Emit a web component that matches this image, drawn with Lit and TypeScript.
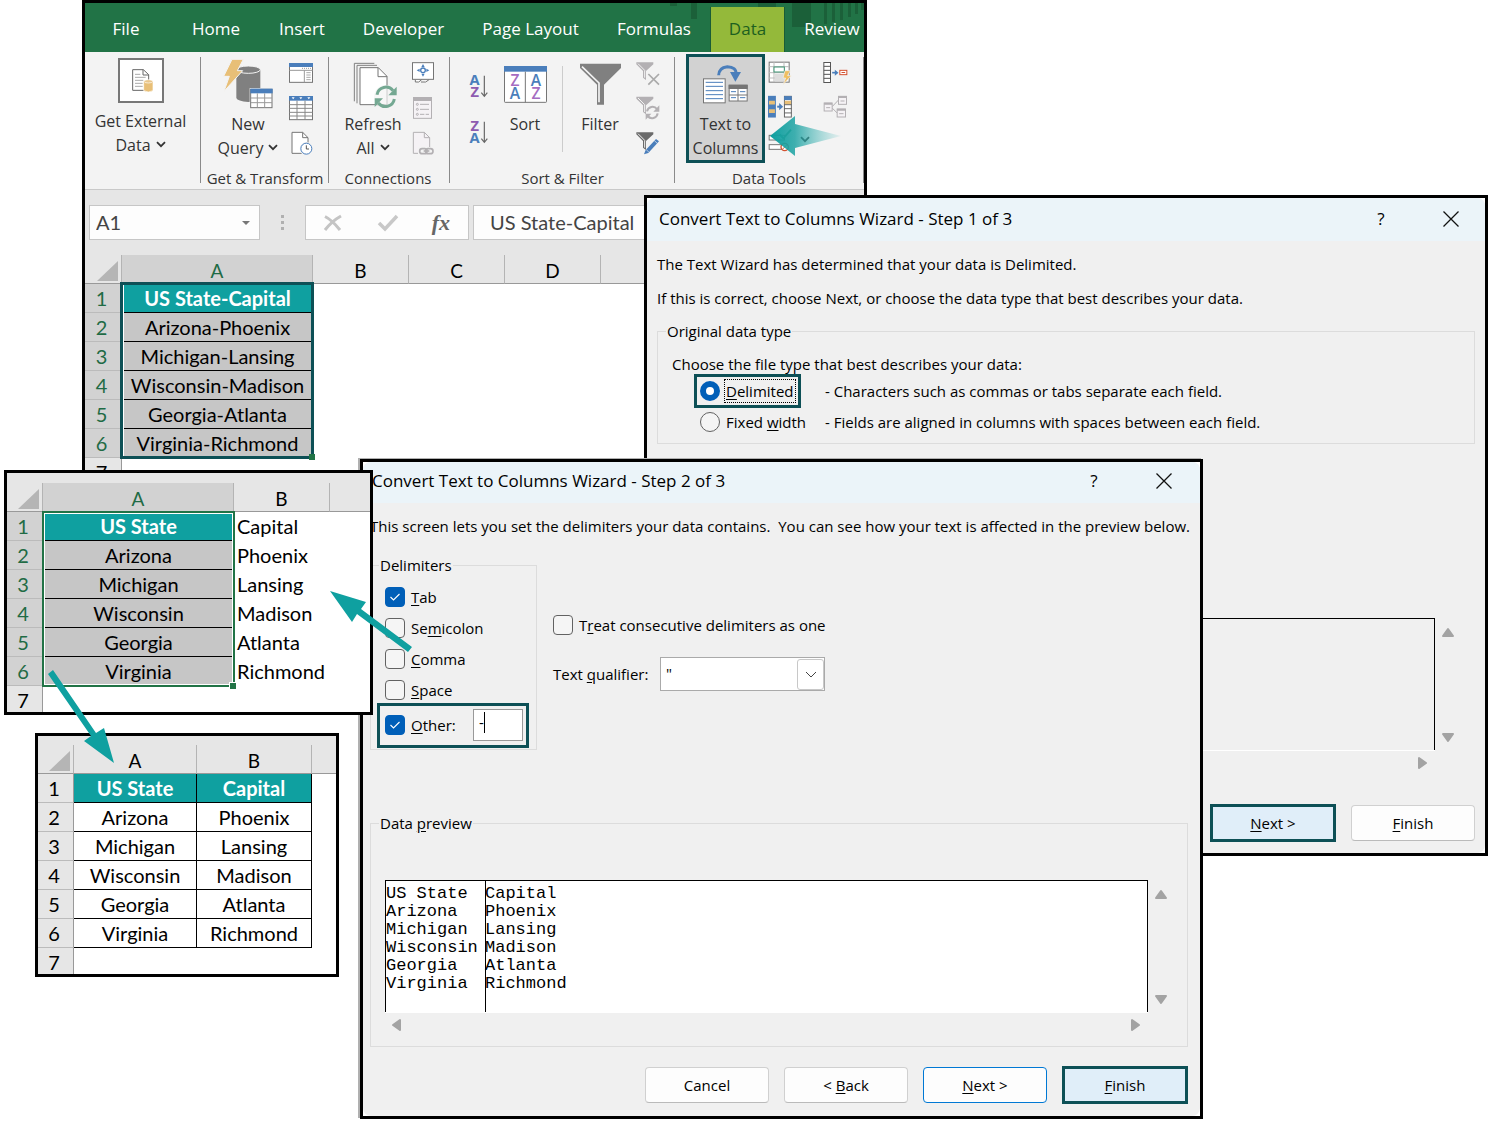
import { LitElement, html, css, svg, nothing, TemplateResult } from "lit";
import { customElement, property } from "lit/decorators.js";
import { classMap } from "lit/directives/class-map.js";
import { styleMap } from "lit/directives/style-map.js";

const GREY = "#757575";
const PALE = "#b3b0b3";
const BLUE = "#4a7ebb";
const PURPLE = "#8e5bb0";
const SAND = "#e8bf77";

const icon = (box: string, w: number, h: number, body: unknown) =>
  html`<svg viewBox=${box} width=${w} height=${h} aria-hidden="true">${body}</svg>`;

const chevron = html`<svg class="chev" viewBox="0 0 10 7" width="10" height="7" aria-hidden="true">
  <path d="M1 1.2 5 5.2 9 1.2" fill="none" stroke="#333" stroke-width="1.8" />
</svg>`;

const externalIcon = icon("114 174 138 135", 46, 45, svg`
  <rect x="117" y="177" width="132" height="129" fill="#fff" stroke="#777" stroke-width="6"/>
  <path d="M158 209H190L206 224V271H158Z" fill="#fff" stroke="#666" stroke-width="3"/>
  <path d="M189 209V225H206" fill="none" stroke="#666" stroke-width="3"/>
  <path d="M165 223H181M165 232H197M165 241H190M165 250H188M165 259H188" stroke="#aaa" stroke-width="3"/>
  <path d="M191 243V272Q205 280 219 272V243Z" fill="${SAND}" stroke="#fff" stroke-width="2"/>
  <ellipse cx="205" cy="244" rx="13" ry="5" fill="#e9c68a" stroke="#fff" stroke-width="2"/>`);

const queryIcon = icon("434 180 147 144", 49, 48, svg`
  <path d="M471 210V294Q474 303 507 306Q543 302 543 294V210Z" fill="#808080"/>
  <ellipse cx="507" cy="209" rx="36" ry="11" fill="#808080" stroke="#f3f3f3" stroke-width="3"/>
  <path d="M458 178H492L474 212H490L434 274L450 229H433Z" fill="${SAND}" stroke="#f3f3f3" stroke-width="3"/>
  <rect x="511" y="264" width="70" height="61" fill="#f3f3f3"/>
  <rect x="514" y="268" width="64" height="55" fill="#fff" stroke="#757575" stroke-width="3"/>
  <rect x="513" y="266" width="67" height="14" fill="${BLUE}"/>
  <path d="M534 280V322M556 280V322M515 294H578M515 308H578" stroke="#999" stroke-width="3"/>`);

const paneIcon = icon("627 190 72 60", 24, 20, svg`
  <rect x="628.5" y="192" width="69" height="56" fill="#fff" stroke="${GREY}" stroke-width="3"/>
  <rect x="627" y="190" width="72" height="12" fill="${BLUE}"/>
  <path d="M666 206H694" stroke="#999" stroke-width="3" stroke-dasharray="3 3"/>
  <path d="M628 212H698M673 212V248" stroke="#999" stroke-width="3"/>
  <path d="M679 219H692M679 226H692M679 233H692M679 240H692" stroke="#aaa" stroke-width="3"/>`);

const tableIcon = icon("627 288 72 72", 24, 24, svg`
  <rect x="628.5" y="290" width="69" height="69" fill="#fff" stroke="${GREY}" stroke-width="3"/>
  <rect x="627" y="288" width="72" height="14" fill="${BLUE}"/>
  <path d="M635 292h9l-4.500 6zM658 292h9l-4.500 6zM682 292h9l-4.500 6z" fill="#fff"/>
  <path d="M628 314H698M628 325H698M628 337H698M628 348H698M651 302V359M675 302V359" stroke="#888" stroke-width="3"/>`);

const recentIcon = icon("629 394 72 72", 24, 24, svg`
  <path d="M638 398H670L686 414V461H638Z" fill="#fff" stroke="${GREY}" stroke-width="3"/>
  <path d="M670 398V414H686" fill="none" stroke="${GREY}" stroke-width="3"/>
  <circle cx="681" cy="447" r="20" fill="#f3f3f3"/>
  <circle cx="681" cy="447" r="16.500" fill="#fff" stroke="${BLUE}" stroke-width="3"/>
  <path d="M681 437V448H689" fill="none" stroke="#555" stroke-width="3"/>`);

const refreshIcon = icon("808 180 144 144", 48, 48, svg`
  <path d="M824 304V190H884" fill="none" stroke="#808080" stroke-width="3"/>
  <path d="M832 310V196H892" fill="none" stroke="#808080" stroke-width="3"/>
  <path d="M841 203H896L922 229V314H841Z" fill="#fff" stroke="#757575" stroke-width="3"/>
  <path d="M895 203V230H922" fill="none" stroke="#757575" stroke-width="3"/>
  <circle cx="918" cy="290" r="35" fill="#f3f3f3" opacity=".7"/>
  <path d="M892 284A27 27 0 0 1 940 272" fill="none" stroke="#74a892" stroke-width="9"/>
  <path d="M951 260V286H926Z" fill="#74a892"/>
  <path d="M944 297A27 27 0 0 1 896 309" fill="none" stroke="#74a892" stroke-width="9"/>
  <path d="M885 321V295H910Z" fill="#74a892"/>`);

const connectIcon = icon("990 188 72 66", 24, 22, svg`
  <path d="M1003 241V248H1013L1022 241M1020 248H1034L1044 241" fill="#fff" stroke="${GREY}" stroke-width="3"/>
  <rect x="994.500" y="190" width="63" height="50" fill="#fff" stroke="${GREY}" stroke-width="3"/>
  <circle cx="1026" cy="213" r="7" fill="#fff" stroke="${BLUE}" stroke-width="4"/>
  <path d="M1026 194l5 9h-10zM1026 232l5-9h-10zM1007 213l9-5v10zM1045 213l-9-5v10z" fill="${BLUE}"/>`);

const propsIcon = icon("993 288 72 72", 24, 24, svg`
  <rect x="1000.500" y="293" width="54" height="62" fill="#f5f2f5" stroke="${PALE}" stroke-width="3"/>
  <rect x="999" y="291" width="57" height="12" fill="${PALE}"/>
  <circle cx="1012" cy="313" r="3" fill="none" stroke="${PALE}" stroke-width="3"/>
  <circle cx="1012" cy="328" r="3" fill="none" stroke="${PALE}" stroke-width="3"/>
  <circle cx="1012" cy="343" r="3" fill="none" stroke="${PALE}" stroke-width="3"/>
  <path d="M1020 313H1047M1020 328H1047M1020 343H1033M1037 343H1047" stroke="${PALE}" stroke-width="3"/>`);

const linksIcon = icon("993 394 72 72", 24, 24, svg`
  <path d="M1000 398H1033L1049 414V461H1000Z" fill="#f5f2f5" stroke="${PALE}" stroke-width="3"/>
  <path d="M1033 398V414H1049" fill="none" stroke="${PALE}" stroke-width="3"/>
  <rect x="1014" y="442" width="50" height="24" fill="#f3f3f3"/>
  <rect x="1019" y="447" width="22" height="15" rx="7.500" fill="none" stroke="${PALE}" stroke-width="5"/>
  <rect x="1037" y="447" width="22" height="15" rx="7.500" fill="none" stroke="${PALE}" stroke-width="5"/>
  <path d="M1031 454H1048" stroke="${PALE}" stroke-width="5"/>`);

const azIcon = (first: string, second: string) => icon("57 220 60 72", 20, 24, svg`
  <g font-family="Open Sans, sans-serif" font-weight="700" font-size="44" text-anchor="middle">
    <text x="74" y="254" fill=${first === "A" ? BLUE : PURPLE}>${first}</text>
    <text x="74" y="289" fill=${second === "A" ? BLUE : PURPLE}>${second}</text>
  </g>
  <path d="M103 225V287M94 276L103 287L112 276" fill="none" stroke="#666" stroke-width="3.500"/>`);

const sortIcon = icon("159 195 129 111", 43, 37, svg`
  <rect x="160.500" y="197" width="126" height="107" rx="2" fill="#fff" stroke="${GREY}" stroke-width="3"/>
  <rect x="159" y="195" width="129" height="17" fill="${BLUE}"/>
  <path d="M223 212V304" stroke="${GREY}" stroke-width="3"/>
  <g font-family="Open Sans, sans-serif" font-weight="600" font-size="47" text-anchor="middle">
    <text x="192" y="255" fill="#a56cc1">Z</text><text x="192" y="295" fill="${BLUE}">A</text>
    <text x="255" y="255" fill="${BLUE}">A</text><text x="255" y="295" fill="#a56cc1">Z</text>
  </g>`);

const filterIcon = icon("390 190 123 126", 41, 42, svg`
  <path d="M390 192H513V205L462 255V315H441V255L390 205Z" fill="#808080"/>
  <path d="M396 201L447 250V308" fill="none" stroke="#f3f3f3" stroke-width="5"/>`);

const funnel = (fill: string) => svg`
  <path d="M558 186H609V192L587 212V239L578 232V212L558 192Z" fill=${fill}/>
  <path d="M563 190L583 210V232" fill="none" stroke="#f3f3f3" stroke-width="3"/>`;
const clearIcon = icon("557 182 72 72", 24, 24, svg`${funnel(PALE)}
  <path d="M594 221L626 253M626 221L594 253" stroke="#aaa" stroke-width="5"/>`);
const reapplyIcon = icon("557 184 72 72", 24, 24, svg`${funnel(PALE)}
  <rect x="588" y="212" width="41" height="44" fill="#f3f3f3"/>
  <path d="M590 230A17 17 0 0 1 620 223M622 236A17 17 0 0 1 592 244" fill="none" stroke="${PALE}" stroke-width="6"/>
  <path d="M627 212V231H609ZM586 255V237H603Z" fill="${PALE}"/>`);
const advancedIcon = icon("557 182 72 72", 24, 24, svg`${funnel("#6a6a6a")}
  <path d="M617 206L626 213L594 248L581 252L586 239Z" fill="${BLUE}"/>
  <path d="M588 238L596 246M612 211L621 219" stroke="#f3f3f3" stroke-width="2"/>`);

const columnsIcon = icon("757 188 138 117", 46, 39, svg`
  <path d="M804 219Q804 196 830 193Q857 194 856 214" fill="none" stroke="${BLUE}" stroke-width="9"/>
  <path d="M838 209H871L854 238Z" fill="${BLUE}"/>
  <rect x="758.500" y="229.500" width="65" height="72" fill="#fff" stroke="#757575" stroke-width="3"/>
  <path d="M765 240H817M765 252H817M765 265H817M765 277H817M765 289H817" stroke="${BLUE}" stroke-width="3"/>
  <rect x="835.500" y="249" width="54" height="47" fill="#fff" stroke="#757575" stroke-width="3"/>
  <rect x="834" y="247" width="57" height="13" fill="#757575"/>
  <path d="M862 260V296M835 278H890" stroke="#757575" stroke-width="3"/>
  <path d="M841 268H856M868 268H884M841 286H856M868 286H884" stroke="${BLUE}" stroke-width="3"/>`);

const flashIcon = icon("955 181 72 72", 24, 24, svg`
  <rect x="958.500" y="184.500" width="60" height="60" fill="#fff" stroke="${GREY}" stroke-width="3"/>
  <path d="M958 198H1018M958 216H1018M958 232H1018M973 184V244M1003 184V244" stroke="#bbb" stroke-width="3"/>
  <rect x="973" y="199" width="31" height="15" fill="#fff" stroke="#3c9273" stroke-width="3"/>
  <path d="M975 219h30v22h-30z" fill="#ddd"/>
  <path d="M1006 210H1022L1014 225H1025L1000 252L1008 232H1000Z" fill="#efbf62" stroke="#f3f3f3" stroke-width="2"/>`);

const consolidateIcon = icon("1122 180 74 72", 25, 24, svg`
  <rect x="1124" y="184.500" width="20" height="60" fill="#fff" stroke="#555" stroke-width="3"/>
  <path d="M1124 196H1144M1124 208H1144M1124 220H1144M1124 232H1144" stroke="#555" stroke-width="3"/>
  <path d="M1149 215H1162" stroke="${BLUE}" stroke-width="5"/><path d="M1157 206L1168 215L1157 224Z" fill="${BLUE}"/>
  <rect x="1172" y="208" width="21" height="13" fill="#fff" stroke="#d3512f" stroke-width="3"/>
  <path d="M1177 214.500H1188" stroke="#d3512f" stroke-width="3"/>`);

const duplicatesIcon = icon("954 286 73 72", 24, 24, svg`
  <rect x="954" y="285" width="24" height="66" fill="${BLUE}"/>
  <path d="M957 300h18v11h-18zM957 326h18v11h-18z" fill="${SAND}"/>
  <rect x="1004" y="286.500" width="21" height="63" fill="#fff" stroke="#666" stroke-width="3"/>
  <path d="M1003 286h23v12h-23z" fill="${BLUE}"/><path d="M1005 300h19v11h-19z" fill="${SAND}"/>
  <path d="M1003 312H1026M1003 324H1026M1003 337H1026" stroke="#666" stroke-width="3"/>
  <path d="M982 318H992" stroke="${BLUE}" stroke-width="6"/><path d="M988 307L1000 318L988 329Z" fill="${BLUE}"/>`);

const relationsIcon = icon("1120 286 74 72", 25, 24, svg`
  <path d="M1147 318L1166 298M1147 322L1162 337" stroke="${PALE}" stroke-width="3"/>
  <g fill="#f5f2f5" stroke="${PALE}" stroke-width="3">
    <rect x="1123" y="307" width="24" height="24"/><rect x="1166" y="287" width="24" height="24"/><rect x="1162" y="325" width="25" height="24"/>
  </g>
  <path d="M1123 309H1147M1166 289H1190M1162 327H1187" stroke="${PALE}" stroke-width="6"/>
  <path d="M1129 321H1141M1172 301H1184M1168 339H1181" stroke="${PALE}" stroke-width="3"/>`);

const validateIcon = icon("955 390 72 72", 24, 24, svg`
  <rect x="958.500" y="403" width="46" height="14" fill="#fff" stroke="${GREY}" stroke-width="3"/>
  <rect x="958.500" y="431" width="46" height="14" fill="#fff" stroke="${GREY}" stroke-width="3"/>
  <path d="M990 400L1001 412L1024 386" fill="none" stroke="#3c9273" stroke-width="6"/>
  <circle cx="1005" cy="438" r="11" fill="#fff" stroke="#d3512f" stroke-width="4"/>
  <path d="M997 446L1013 430" stroke="#d3512f" stroke-width="3"/>`);

const fontStack = css`
  :host {
    --ui: "Open Sans", "Noto Sans", sans-serif;
    --cell: Lato, "Open Sans", sans-serif;
    --mark: #0d5056;
    --teal: #0fa0a0;
    display: block;
    box-sizing: border-box;
  }
  * {
    box-sizing: border-box;
  }
  svg {
    display: block;
    flex: none;
    overflow: visible;
  }
  button,
  input,
  select {
    font: inherit;
    color: inherit;
    margin: 0;
  }
`;

interface Column {
  name: string;
  width: number;
}

/** A worksheet fragment: lettered columns, numbered rows and an optional selected first column. */
@customElement("sheet-grid")
export class SheetGrid extends LitElement {
  @property({ attribute: false }) columns: Column[] = [];
  @property({ attribute: false }) rows: string[][] = [];
  @property({ type: Number }) gutter = 36;
  @property({ type: Number }) ruled = 1;
  @property({ type: Boolean }) selected = false;
  @property({ type: Boolean }) strong = false;

  static styles = [
    fontStack,
    css`
      :host {
        position: relative;
        background: #fff;
      }
      table {
        width: 100%;
        table-layout: fixed;
        border-collapse: separate;
        border-spacing: 0;
        font-family: var(--cell);
        font-size: 20px;
        line-height: 28px;
        color: #000;
      }
      th,
      td {
        padding: 0;
        height: 29px;
        font-weight: 400;
        text-align: center;
        white-space: nowrap;
        overflow: hidden;
      }
      .letter,
      .corner {
        background: #e6e6e6;
        border-right: 1px solid #b4b4b4;
        border-bottom: 1px solid #999;
        font-size: 19px;
      }
      .letter {
        padding-top: 3px;
        line-height: 24px;
      }
      .last {
        border-right: 0;
      }
      .corner svg {
        margin: 4px 3px 0 auto;
      }
      .number {
        background: #e6e6e6;
        border-right: 1px solid #999;
        border-bottom: 1px solid #bbb;
        font-size: 20px;
        padding-right: 3px;
      }
      .on {
        background: #d2d2d2;
        color: #1f6b45;
      }
      .plain {
        text-align: left;
        padding-left: 3px;
        border-bottom: 1px solid transparent;
      }
      .ruled {
        border-bottom: 1px solid #000;
      }
      .edge {
        border-right: 1px solid #000;
      }
      .picked {
        background: #c6c6c6;
      }
      .title {
        background: var(--teal);
        color: #fff;
        font-weight: 700;
      }
      .frame {
        position: absolute;
        top: 28px;
        height: 176px;
        border: 2px solid #217346;
        box-shadow: inset 1px 1px #fff, inset -1px -1px #fff;
      }
      .frame::after {
        content: "";
        position: absolute;
        right: -3px;
        bottom: -4px;
        width: 6px;
        height: 6px;
        background: #217346;
        outline: 1px solid #fff;
      }
      .strong {
        top: 27px;
        height: 177px;
        border: 3px solid var(--mark);
        box-shadow: inset 1px 0 #fff;
      }
      .strong::after {
        right: -4px;
        outline: 0;
      }
    `,
  ];

  render() {
    const cell = (text: string, row: number, col: number) => {
      const inRange = row < 6 && col < this.ruled;
      return html`<td
        class=${classMap({
          ruled: inRange,
          edge: inRange && !this.selected,
          picked: inRange && this.selected,
          title: inRange && row === 0,
          plain: !inRange,
        })}
      >${text}</td>`;
    };
    const inset = this.strong ? 3 : 2;
    const frame = {
      left: `${this.gutter - inset + 1}px`,
      width: `${(this.columns[0]?.width ?? 0) + inset}px`,
    };
    return html`
      <table>
        <colgroup>
          <col style=${styleMap({ width: `${this.gutter}px` })} />
          ${this.columns.map((c) => html`<col style=${styleMap({ width: `${c.width}px` })} />`)}
          <col />
        </colgroup>
        <thead>
          <tr>
            <td class="corner">
              <svg viewBox="0 0 21 20" width="21" height="20" aria-hidden="true"><path d="M21 0V20H0Z" fill="#b5b5b5" /></svg>
            </td>
            ${this.columns.map(
              (c, i) => html`<th scope="col" class="letter ${this.selected && i === 0 ? "on" : ""}">${c.name}</th>`
            )}
            <td class="letter last"></td>
          </tr>
        </thead>
        <tbody>
          ${this.rows.map(
            (r, i) => html`<tr>
              <th scope="row" class="number ${this.selected && i < 6 ? "on" : ""}">${i + 1}</th>
              ${this.columns.map((_, j) => cell(r[j] ?? "", i, j))}
              <td></td>
            </tr>`
          )}
        </tbody>
      </table>
      ${this.selected
        ? html`<div class="frame ${this.strong ? "strong" : ""}" style=${styleMap(frame)}></div>`
        : nothing}
    `;
  }
}

/** Ribbon tabs, tool groups and the formula bar. */
@customElement("excel-ribbon")
export class ExcelRibbon extends LitElement {
  static styles = [
    fontStack,
    css`
      :host {
        font-family: var(--ui);
        color: #333;
      }
      button {
        border: 0;
        padding: 0;
        background: none;
      }
      .tabs {
        position: relative;
        display: grid;
        grid-template-columns: 87px 88px 84px 119px 135px 112px 75px 94px;
        height: 49px;
        padding-top: 4px;
        background: #217346;
        overflow: hidden;
      }
      .skyline {
        position: absolute;
        right: 0;
        top: 0;
      }
      .tab {
        position: relative;
        padding-bottom: 1px;
        color: #fff;
        font-size: 17px;
        line-height: 42px;
        text-align: center;
        white-space: nowrap;
      }
      .first {
        padding-right: 5px;
      }
      .current {
        background: #94b93a;
        color: #1d6020;
        border: solid #1a5c36;
        border-width: 0 1px;
      }
      .ribbon {
        display: flex;
        height: 138px;
        background: #f3f3f3;
        border-bottom: 1px solid #c9c9c9;
      }
      .group {
        display: flex;
        flex-direction: column;
        justify-content: space-between;
        padding-bottom: 1px;
        background: linear-gradient(#8a8a8a, #8a8a8a) right 5px / 1px 126px no-repeat;
      }
      .g1 {
        width: 116px;
      }
      .g2 {
        width: 128px;
        padding-left: 12px;
      }
      .g3 {
        width: 121px;
        padding-left: 9px;
      }
      .g4 {
        width: 225px;
        padding-left: 15px;
      }
      .g5 {
        width: 189px;
        padding-left: 11px;
      }
      .tools {
        display: flex;
        align-items: flex-start;
      }
      .caption {
        font-size: 15px;
        line-height: 20px;
        text-align: center;
        white-space: nowrap;
      }
      .g2 .caption {
        margin-left: -12px;
      }
      .g3 .caption {
        margin-left: -12px;
      }
      .g4 .caption {
        margin-left: -15px;
      }
      .g5 .caption {
        margin-left: -12px;
      }
      .big {
        display: flex;
        flex-direction: column;
        align-items: center;
        width: 70px;
        padding-top: 8px;
        font-size: 16px;
        line-height: 24px;
        white-space: nowrap;
      }
      .art {
        display: flex;
        align-items: center;
        justify-content: center;
        height: 48px;
        margin-bottom: 4px;
      }
      .wide {
        width: 111px;
        padding-top: 6px;
      }
      .wide .art {
        height: 45px;
        margin-bottom: 6px;
      }
      .medium {
        width: 60px;
      }
      .chev {
        display: inline-block;
        margin: 0 0 3px 5px;
      }
      .stack {
        display: grid;
        grid-auto-rows: 24px;
        gap: 11px;
        padding-top: 9px;
        margin-left: 6px;
        justify-items: center;
      }
      .stack button {
        display: flex;
        align-items: center;
      }
      .near {
        margin-left: 3px;
      }
      .order {
        grid-auto-rows: 24px;
        gap: 22px;
        padding-top: 22px;
        margin: 0 3px 0 0;
        width: 27px;
      }
      .rule {
        width: 1px;
        height: 86px;
        margin: 14px 7px 0;
        background: #ccc;
      }
      .marked {
        width: 79px;
        margin-top: 2px;
        padding-top: 3px;
        padding-bottom: 0;
        border: 3px solid var(--mark);
        background: #d2d2d2;
      }
      .more {
        align-self: flex-end;
        margin: 0 7px 12px 3px;
      }
      .formula {
        display: flex;
        align-items: center;
        padding: 15px 0 15px 4px;
        background: #e6e6e6;
        font-family: var(--cell);
        font-size: 20px;
        color: #444;
      }
      .box {
        display: flex;
        align-items: center;
        height: 35px;
        border: 1px solid #c6c6c6;
        background: #fdfdfd;
      }
      .name {
        width: 171px;
        padding: 0 9px 0 6px;
        justify-content: space-between;
      }
      .name input,
      .entry input {
        border: 0;
        padding: 0 0 1px;
        background: none;
        min-width: 0;
        flex: 1;
      }
      .grip {
        width: 45px;
        display: flex;
        justify-content: center;
      }
      .ops {
        width: 164px;
        padding: 0 18px 0 16px;
        justify-content: space-between;
        margin-right: 4px;
      }
      .fx {
        font: italic 700 22px "Liberation Serif", serif;
        color: #666;
      }
      .entry {
        flex: 1;
        padding-left: 16px;
        border-right: 0;
      }
    `,
  ];

  private big(art: TemplateResult, first: string, second = "", cls = "", arrow = false) {
    return html`<button class="big ${cls}">
      <span class="art">${art}</span>
      <span>${first}</span>
      ${second ? html`<span>${second}${arrow ? chevron : nothing}</span>` : nothing}
    </button>`;
  }

  private stack(items: [string, TemplateResult][], cls = "") {
    return html`<div class="stack ${cls}">
      ${items.map(([label, art]) => html`<button aria-label=${label}>${art}</button>`)}
    </div>`;
  }

  render() {
    const tabs = ["File", "Home", "Insert", "Developer", "Page Layout", "Formulas", "Data", "Review"];
    return html`
      <nav class="tabs">
        <svg class="skyline" viewBox="0 0 200 26" width="200" height="26" aria-hidden="true">
          <path
            d="M6 0h7v3H6zM27 0h6v16h-6zM94 0h18v5H94zM128 0h19v24h-19zM160 0h3v21h-3zM168 0h3v19h-3zM176 0h3v17h-3zM184 0h3v14h-3zM191 0h3v11h-3zM197 0h3v7h-3z"
            fill="#1b6039"
          />
        </svg>
        ${tabs.map(
          (t) => html`<button class="tab ${t === "File" ? "first" : ""} ${t === "Data" ? "current" : ""}">${t}</button>`
        )}
      </nav>
      <div class="ribbon">
        <section class="group g1">${this.big(externalIcon, "Get External", "Data", "wide", true)}</section>
        <section class="group g2">
          <div class="tools">
            ${this.big(queryIcon, "New", "Query", "", true)}
            ${this.stack([["Show queries", paneIcon], ["From table", tableIcon], ["Recent sources", recentIcon]])}
          </div>
          <div class="caption">Get &amp; Transform</div>
        </section>
        <section class="group g3">
          <div class="tools">
            ${this.big(refreshIcon, "Refresh", "All", "", true)}
            ${this.stack([["Connections", connectIcon], ["Properties", propsIcon], ["Edit links", linksIcon]], "near")}
          </div>
          <div class="caption">Connections</div>
        </section>
        <section class="group g4">
          <div class="tools">
            ${this.stack([["Sort ascending", azIcon("A", "Z")], ["Sort descending", azIcon("Z", "A")]], "order")}
            ${this.big(sortIcon, "Sort", "", "medium")}
            <div class="rule"></div>
            ${this.big(filterIcon, "Filter", "", "medium")}
            ${this.stack([["Clear", clearIcon], ["Reapply", reapplyIcon], ["Advanced", advancedIcon]])}
          </div>
          <div class="caption">Sort &amp; Filter</div>
        </section>
        <section class="group g5">
          <div class="tools">
            ${this.big(columnsIcon, "Text to", "Columns", "marked")}
            ${this.stack(
              [["Flash fill", flashIcon], ["Remove duplicates", duplicatesIcon], ["Data validation", validateIcon]],
              "near"
            )}
            <div class="more">${chevron}</div>
            ${this.stack([["Consolidate", consolidateIcon], ["Relationships", relationsIcon]])}
          </div>
          <div class="caption">Data Tools</div>
        </section>
      </div>
      <div class="formula">
        <div class="box name">
          <input aria-label="Name box" .value=${"A1"} />
          <svg viewBox="0 0 8 4" width="8" height="4" aria-hidden="true"><path d="M0 0H8L4 4Z" fill="#777" /></svg>
        </div>
        <div class="grip">
          <svg viewBox="0 0 3 15" width="3" height="15" aria-hidden="true">
            <path d="M0 0h3v3H0zM0 6h3v3H0zM0 12h3v3H0z" fill="#b0b0b0" />
          </svg>
        </div>
        <div class="box ops">
          <button aria-label="Cancel entry">
            <svg viewBox="0 0 22 18" width="22" height="18">
              <path d="M3 2.500Q10 6 18 16M19 2Q10 7 3 16" fill="none" stroke="#c4c4c4" stroke-width="3" />
            </svg>
          </button>
          <button aria-label="Accept entry">
            <svg viewBox="0 0 22 18" width="22" height="18">
              <path d="M2 9L8 15L20 2" fill="none" stroke="#c8c8c8" stroke-width="3.500" />
            </svg>
          </button>
          <button class="fx" aria-label="Insert function">fx</button>
        </div>
        <div class="box entry"><input aria-label="Formula" .value=${"US State-Capital"} /></div>
      </div>
    `;
  }
}

const dialogStyles = css`
  :host {
    background: #bdbdbd;
    font-family: var(--ui);
    font-size: 15px;
    line-height: 20px;
    color: #000;
  }
  .face {
    display: flex;
    flex-direction: column;
    height: 100%;
    border-radius: 8px;
    overflow: hidden;
    background: #f0f0f0;
  }
  .bar {
    display: flex;
    align-items: center;
    height: 43px;
    padding: 0 26px 2px 12px;
    background: #ebf4f9;
    font-size: 17px;
  }
  .bar h2 {
    flex: 1;
    margin: 0;
    font-size: 17px;
    font-weight: 400;
    white-space: nowrap;
  }
  .bar button {
    border: 0;
    padding: 0;
    background: none;
  }
  .help {
    width: 20px;
    margin-right: 52px;
  }
  .body {
    flex: 1;
    display: flex;
    flex-direction: column;
    padding: 13px 10px 11px;
  }
  p {
    margin: 0;
    white-space: pre;
  }
  fieldset {
    margin: 0;
    min-width: 0;
    padding: 0;
    border: 1px solid #dcdcdc;
  }
  legend {
    margin-left: 8px;
    padding: 0 1px;
  }
  label {
    white-space: nowrap;
  }
  u {
    text-underline-offset: 2px;
  }
  input[type="radio"],
  input[type="checkbox"] {
    appearance: none;
    flex: none;
    width: 20px;
    height: 20px;
    border: 1px solid #626262;
    background: #f5f5f5;
  }
  input[type="radio"] {
    border-radius: 50%;
  }
  input[type="radio"]:checked {
    border: 6px solid #005fb8;
    background: #fff;
  }
  input[type="checkbox"] {
    border-radius: 4px;
  }
  .preview {
    display: grid;
    grid-template-columns: 1fr 40px;
    grid-template-rows: 132px 26px;
  }
  .pane {
    border: solid #000;
    border-width: 1px 1px 0 1px;
    box-shadow: 0 1px #fff;
  }
  .vbar {
    display: flex;
    flex-direction: column;
    justify-content: space-between;
    padding: 10px 0 8px 7px;
  }
  .hbar {
    display: flex;
    justify-content: space-between;
    align-items: center;
    padding: 0 8px 0 7px;
  }
  .actions {
    display: flex;
    justify-content: flex-end;
    align-items: center;
    gap: 15px;
  }
  .actions button {
    width: 124px;
    height: 36px;
    padding: 0;
    border: 1px solid #d0d0d0;
    border-bottom-color: #bababa;
    border-radius: 4px;
    background: #fdfdfd;
  }
  .actions .default {
    border-color: #0078d4;
  }
  .actions .target {
    width: 126px;
    height: 38px;
    border: 3px solid var(--mark);
    border-radius: 0;
    background: #e0eef9;
  }
`;

const arrow = (d: string, w: number, h: number) =>
  html`<svg viewBox="0 0 ${w} ${h}" width=${w} height=${h} aria-hidden="true">
    <path d=${d} fill="#a3a3a3" stroke="#a3a3a3" stroke-width="2" stroke-linejoin="round" />
  </svg>`;
const up = arrow("M1 8H11L6 1Z", 12, 9);
const down = arrow("M1 1H11L6 8Z", 12, 9);
const right = arrow("M1 1V11L8 6Z", 9, 12);
const left = arrow("M8 1V11L1 6Z", 9, 12);

const titleBar = (step: number) => html`<header class="bar">
  <h2>Convert Text to Columns Wizard - Step ${step} of 3</h2>
  <button class="help" aria-label="Help">?</button>
  <button aria-label="Close">
    <svg viewBox="0 0 16 16" width="16" height="16">
      <path d="M.5.5 15.500 15.500M15.500.5.5 15.500" stroke="#111" stroke-width="1.300" />
    </svg>
  </button>
</header>`;

@customElement("wizard-type")
export class WizardType extends LitElement {
  static styles = [
    fontStack,
    dialogStyles,
    css`
      .body p + p {
        margin: 14px 0 13px;
      }
      .types {
        padding: 13px 14px 7px;
      }
      .choice {
        display: grid;
        grid-template-columns: 131px 1fr;
        align-items: center;
        margin-left: 22px;
        height: 28px;
      }
      .choice label {
        display: flex;
        align-items: center;
        gap: 6px;
        padding-left: 6px;
      }
      .picked {
        height: 34px;
      }
      .picked label {
        width: 107px;
        height: 34px;
        padding-left: 3px;
        gap: 4px;
        border: 3px solid var(--mark);
      }
      .focus {
        padding: 1px;
        border: 1px dotted #000;
      }
      .preview {
        margin: auto 0 28px 15px;
      }
    `,
  ];

  render() {
    return html`<div class="face">
      ${titleBar(1)}
      <div class="body">
        <p>The Text Wizard has determined that your data is Delimited.</p>
        <p>If this is correct, choose Next, or choose the data type that best describes your data.</p>
        <fieldset>
          <legend>Original data type</legend>
          <div class="types">
            <p>Choose the file type that best describes your data:</p>
            <div class="choice picked">
              <label><input type="radio" name="kind" checked /><span class="focus"><u>D</u>elimited</span></label>
              <span>- Characters such as commas or tabs separate each field.</span>
            </div>
            <div class="choice">
              <label><input type="radio" name="kind" /><span>Fixed <u>w</u>idth</span></label>
              <span>- Fields are aligned in columns with spaces between each field.</span>
            </div>
          </div>
        </fieldset>
        <div class="preview">
          <div class="pane"></div>
          <div class="vbar">${up}${down}</div>
          <div class="hbar"><span></span>${right}</div>
        </div>
        <div class="actions">
          <button class="target"><u>N</u>ext &gt;</button>
          <button><u>F</u>inish</button>
        </div>
      </div>
    </div>`;
  }
}

@customElement("wizard-delimiters")
export class WizardDelimiters extends LitElement {
  static styles = [
    fontStack,
    dialogStyles,
    css`
      .bar {
        height: 41px;
        padding: 0 28px 4px 9px;
      }
      .body {
        padding: 13px 12px 11px 7px;
      }
      .options {
        display: grid;
        grid-template-columns: 167px 1fr;
        gap: 16px;
        margin: 19px 0 63px;
      }
      .list {
        display: grid;
        grid-auto-rows: minmax(31px, auto);
        padding: 6px 7px 1px 6px;
      }
      .check {
        display: flex;
        align-items: center;
        gap: 6px;
        padding-left: 8px;
      }
      .tick {
        display: grid;
        flex: none;
      }
      .tick > * {
        grid-area: 1 / 1;
      }
      .tick svg {
        visibility: hidden;
        pointer-events: none;
        margin: auto;
      }
      .tick input:checked {
        border-color: #005fb8;
        background: #005fb8;
      }
      .tick input:checked + svg {
        visibility: visible;
      }
      .other {
        display: flex;
        align-items: center;
        justify-content: space-between;
        height: 45px;
        margin-top: -2px;
        padding: 0 3px 2px 0;
        border: 3px solid var(--mark);
      }
      .other .check {
        padding-left: 5px;
      }
      .entry {
        position: relative;
      }
      .entry input {
        display: block;
        width: 50px;
        height: 32px;
        padding: 0 5px 6px;
        border: 1px solid #999;
        background: #fff;
      }
      .caret {
        position: absolute;
        left: 11px;
        top: 3px;
        width: 1px;
        height: 21px;
        background: #000;
      }
      .side {
        display: flex;
        flex-direction: column;
        gap: 22px;
        padding-top: 60px;
      }
      .side .check {
        padding-left: 0;
      }
      .qualifier {
        display: flex;
        align-items: center;
      }
      .qualifier label {
        width: 107px;
      }
      .combo {
        display: grid;
        width: 165px;
      }
      .combo > * {
        grid-area: 1 / 1;
      }
      select {
        appearance: none;
        height: 34px;
        padding: 0 5px 3px;
        border: 1px solid #aaa;
        border-radius: 0;
        background: #fff;
      }
      .drop {
        place-self: center end;
        display: grid;
        place-items: center;
        width: 27px;
        height: 31px;
        margin-right: 1px;
        border: 1px solid #c8c8c8;
        border-radius: 3px;
        pointer-events: none;
      }
      .data {
        padding: 47px 0 8px 14px;
      }
      .preview {
        grid-template-columns: 1fr 39px;
      }
      .pane {
        padding-top: 4px;
        background: linear-gradient(#000, #000) 99px 0 / 1px 100% no-repeat #fff;
      }
      .pane table {
        border-spacing: 0;
        table-layout: fixed;
        width: 198px;
        font-family: "Liberation Mono", monospace;
        font-size: 17px;
        line-height: 18px;
      }
      .pane td {
        padding: 0;
        white-space: pre;
      }
      .actions {
        margin-top: 19px;
      }
    `,
  ];

  private check(label: TemplateResult, checked = false) {
    return html`<label class="check">
      <span class="tick">
        <input type="checkbox" ?checked=${checked} />
        <svg viewBox="0 0 12 8" width="12" height="8" aria-hidden="true">
          <path d="M1.500 4 4.500 7 10.500 1" fill="none" stroke="#fff" stroke-width="1.100" />
        </svg>
      </span>
      <span>${label}</span>
    </label>`;
  }

  render() {
    const data = [
      ["US State", "Capital"],
      ["Arizona", "Phoenix"],
      ["Michigan", "Lansing"],
      ["Wisconsin", "Madison"],
      ["Georgia", "Atlanta"],
      ["Virginia", "Richmond"],
    ];
    return html`<div class="face">
      ${titleBar(2)}
      <div class="body">
        <p>This screen lets you set the delimiters your data contains.  You can see how your text is affected in the preview below.</p>
        <div class="options">
          <fieldset>
            <legend>Delimiters</legend>
            <div class="list">
              ${this.check(html`<u>T</u>ab`, true)} ${this.check(html`Se<u>m</u>icolon`)}
              ${this.check(html`<u>C</u>omma`)} ${this.check(html`<u>S</u>pace`)}
              <div class="other">
                ${this.check(html`<u>O</u>ther:`, true)}
                <div class="entry"><input aria-label="Other delimiter" .value=${"-"} /><span class="caret"></span></div>
              </div>
            </div>
          </fieldset>
          <div class="side">
            ${this.check(html`T<u>r</u>eat consecutive delimiters as one`)}
            <div class="qualifier">
              <label for="qualifier">Text <u>q</u>ualifier:</label>
              <div class="combo">
                <select id="qualifier">
                  <option>"</option>
                </select>
                <span class="drop">
                  <svg viewBox="0 0 12 7" width="12" height="7" aria-hidden="true">
                    <path d="M1 1 6 6 11 1" fill="none" stroke="#444" />
                  </svg>
                </span>
              </div>
            </div>
          </div>
        </div>
        <fieldset>
          <legend>Data <u>p</u>review</legend>
          <div class="data">
            <div class="preview">
              <div class="pane">
                <table>
                  <tbody>
                    ${data.map((r) => html`<tr>${r.map((c) => html`<td>${c}</td>`)}</tr>`)}
                  </tbody>
                </table>
              </div>
              <div class="vbar">${up}${down}</div>
              <div class="hbar">${left}${right}</div>
            </div>
          </div>
        </fieldset>
        <div class="actions">
          <button>Cancel</button>
          <button>&lt; <u>B</u>ack</button>
          <button class="default"><u>N</u>ext &gt;</button>
          <button class="target"><u>F</u>inish</button>
        </div>
      </div>
    </div>`;
  }
}

@customElement("app-root")
export class AppRoot extends LitElement {
  static styles = [
    fontStack,
    css`
      :host {
        position: relative;
        min-height: 100vh;
        background: #fff;
        overflow: hidden;
      }
      .window {
        position: absolute;
        border: 3px solid #000;
        background: #fff;
        overflow: hidden;
      }
      .book {
        left: 82px;
        top: 0;
        width: 785px;
        height: 473px;
      }
      .step1 {
        left: 644px;
        top: 195px;
        width: 844px;
        height: 661px;
      }
      .step2 {
        left: 360px;
        top: 459px;
        width: 843px;
        height: 660px;
        box-shadow: -2px -1px #b0b0b0;
      }
      .split {
        left: 4px;
        top: 470px;
        width: 369px;
        height: 245px;
      }
      .result {
        left: 35px;
        top: 733px;
        width: 304px;
        height: 244px;
      }
      .sheet {
        padding-top: 10px;
        background: #e6e6e6;
      }
      .result.sheet {
        padding-top: 9px;
      }
      .arrow {
        position: absolute;
        pointer-events: none;
      }
      .a1 {
        left: 330px;
        top: 590px;
      }
      .a2 {
        left: 46px;
        top: 668px;
      }
      .a3 {
        left: 770px;
        top: 116px;
      }
    `,
  ];

  render() {
    const states = ["US State", "Arizona", "Michigan", "Wisconsin", "Georgia", "Virginia"];
    const capitals = ["Capital", "Phoenix", "Lansing", "Madison", "Atlanta", "Richmond"];
    const joined = [...states.map((s, i) => [`${s}-${capitals[i]}`]), []];
    const pairs = [...states.map((s, i) => [s, capitals[i]]), []];
    return html`
      <div class="window book">
        <excel-ribbon></excel-ribbon>
        <sheet-grid
          .columns=${[
            { name: "A", width: 191 },
            { name: "B", width: 96 },
            { name: "C", width: 96 },
            { name: "D", width: 96 },
          ]}
          .rows=${joined}
          .gutter=${37}
          selected
          strong
        ></sheet-grid>
      </div>
      <wizard-type class="window step1"></wizard-type>
      <wizard-delimiters class="window step2"></wizard-delimiters>
      <div class="window split sheet">
        <sheet-grid
          .columns=${[
            { name: "A", width: 191 },
            { name: "B", width: 96 },
          ]}
          .rows=${pairs}
          selected
        ></sheet-grid>
      </div>
      <div class="window result sheet">
        <sheet-grid
          .columns=${[
            { name: "A", width: 123 },
            { name: "B", width: 115 },
          ]}
          .rows=${pairs}
          .ruled=${2}
        ></sheet-grid>
      </div>
      <svg class="arrow a1" viewBox="330 590 84 64" width="84" height="64" aria-hidden="true">
        <path d="M330 591 366 602 361 609 412 647 408 652 357 614 352 622Z" fill="#0fa0a0" />
      </svg>
      <svg class="arrow a2" viewBox="46 668 72 98" width="72" height="98" aria-hidden="true">
        <path d="M114 763 104 728 96 733 53 670 48 674 91 736 84 741Z" fill="#0fa0a0" />
      </svg>
      <svg class="arrow a3" viewBox="770 116 72 40" width="72" height="40" aria-hidden="true">
        <defs>
          <linearGradient id="fade" x1="0" x2="1" y1="0" y2="0">
            <stop offset="0" stop-color="#0fa0a0" />
            <stop offset=".35" stop-color="#1ea3a3" stop-opacity=".85" />
            <stop offset="1" stop-color="#5cc0c0" stop-opacity=".1" />
          </linearGradient>
        </defs>
        <path d="M770 136 795 116V124L841 136 795 148V156Z" fill="url(#fade)" />
      </svg>
    `;
  }
}
